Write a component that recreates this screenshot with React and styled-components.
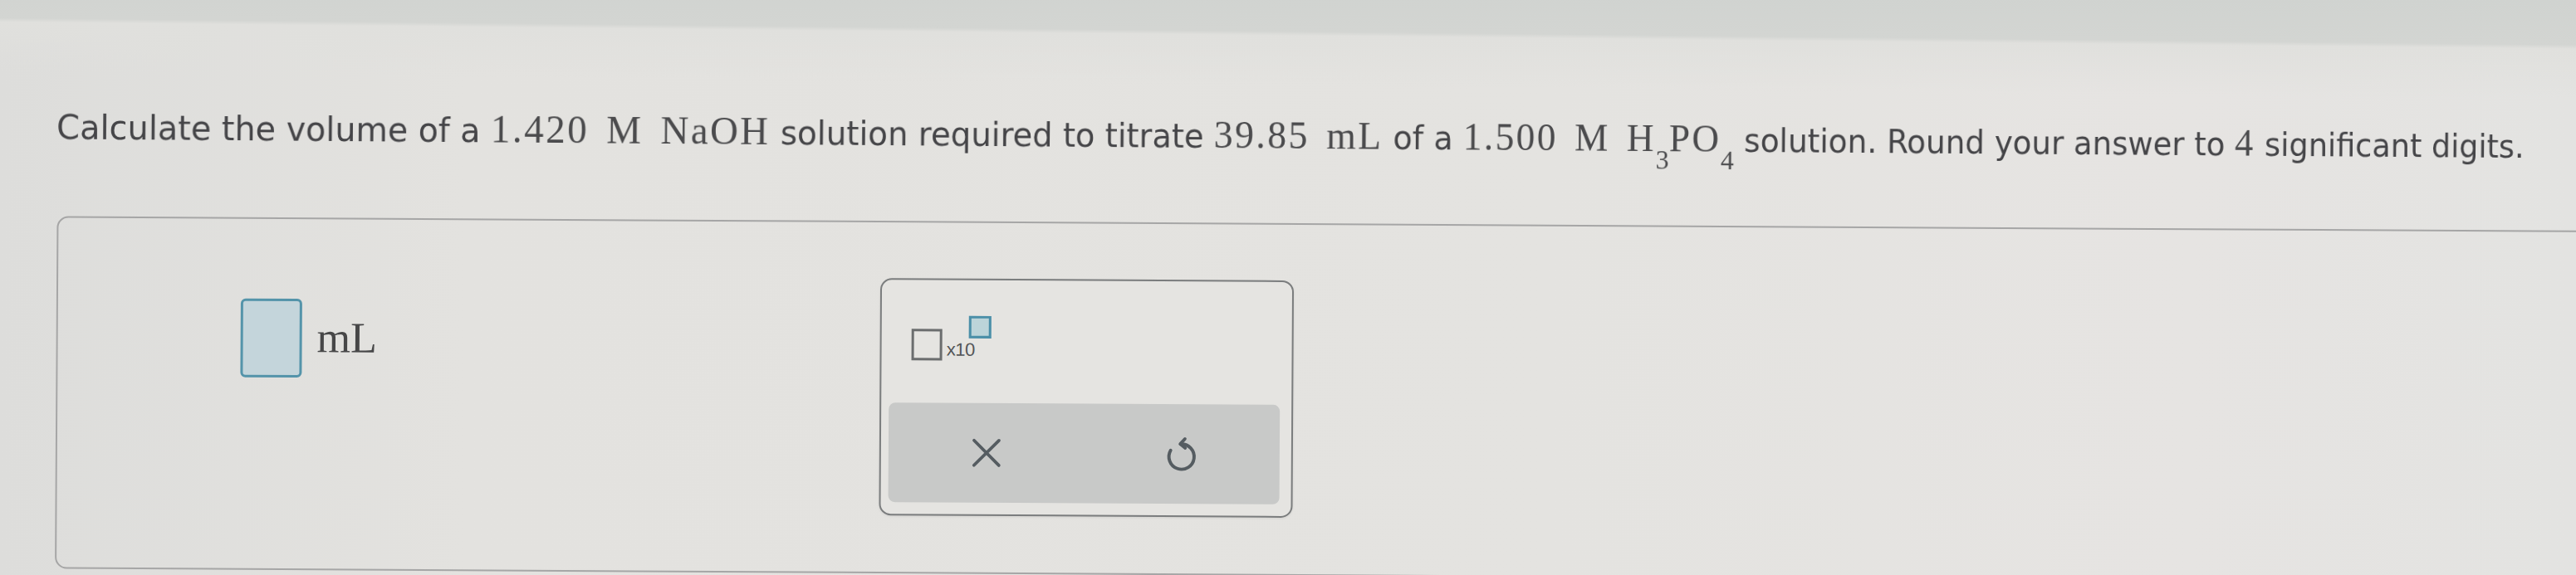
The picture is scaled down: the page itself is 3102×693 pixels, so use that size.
import React from 'react';
import styled, { createGlobalStyle } from 'styled-components';

const GlobalStyle = createGlobalStyle`
  html, body {
    margin: 0;
    padding: 0;
  }

  body {
    width: 3102px;
    height: 693px;
    overflow: hidden;
    font-family: "DejaVu Sans", Verdana, sans-serif;
    background:
      linear-gradient(180.6deg, #d0d3d0 0, #d3d5d2 54px, #e0e0dd 59px, rgba(224, 224, 221, 0) 120px),
      linear-gradient(90deg, #dddddb 0, #e3e2df 18%, #e4e3e0 60%, #e6e4e2 85%, #e3e3e1 100%);
  }
`;

const Page = styled.main`
  padding: 129px 0 0 69px;
  transform: rotate(0.33deg);
  transform-origin: 0 0;
`;

/* the photo was taken at a slight angle: the far (right) end of the line is smaller */
const Question = styled.p`
  margin: 0 0 83px;
  height: 48px;
  white-space: nowrap;
  font-size: 40px;
  line-height: 48px;
  color: #454548;
  transform: perspective(2000px) rotateY(1.76deg) rotate(0.12deg);
  transform-origin: 0 50%;
`;

const Math = styled.span`
  font-family: "Liberation Serif", "Times New Roman", serif;
  font-size: 48px;
  line-height: 0;
  letter-spacing: 2.5px;
  word-spacing: 7px;
  color: #4b4b4d;
`;

const Sub = styled.sub`
  font-size: 34px;
  line-height: 0;
  letter-spacing: 0;
  vertical-align: -22px;
`;

const Panel = styled.section`
  box-sizing: border-box;
  display: flex;
  align-items: flex-start;
  margin-left: 1px;
  width: 3200px;
  height: 425px;
  padding: 67px 0 0 220px;
  border: 2px solid #a6a6a6;
  border-radius: 14px;
`;

const AnswerGroup = styled.div`
  display: flex;
  align-items: flex-start;
  margin-top: 29px;
`;

const AnswerBox = styled.div`
  box-sizing: border-box;
  width: 74px;
  height: 95px;
  border: 3px solid #5494aa;
  border-radius: 6px;
  background: #c4d5db;
`;

const Unit = styled.span`
  margin: 21px 0 0 18px;
  font-family: "Liberation Serif", "Times New Roman", serif;
  font-size: 52px;
  line-height: 51px;
  color: #474748;
`;

const Keypad = styled.div`
  box-sizing: border-box;
  display: flex;
  flex-direction: column;
  align-items: flex-start;
  margin-left: 606px;
  width: 498px;
  height: 286px;
  padding: 0 14px 14px 9px;
  border: 2px solid #7b7d7e;
  border-radius: 14px;
  background: #e5e4e1;
  box-shadow: 0 1px 3px rgba(0, 0, 0, 0.08);
`;

const SciNotation = styled.div`
  display: flex;
  align-items: flex-end;
  margin: 43px 0 0 27px;
`;

const Mantissa = styled.span`
  box-sizing: border-box;
  width: 37px;
  height: 38px;
  border: 3px solid #6b6d6e;
`;

const Times = styled.span`
  margin: 0 0 2px 5px;
  font-family: "Liberation Sans", Arial, sans-serif;
  font-size: 22px;
  line-height: 22px;
  letter-spacing: -0.5px;
  color: #535557;
`;

const Exponent = styled.span`
  box-sizing: border-box;
  align-self: flex-start;
  margin: 0 0 27px -7px;
  width: 27px;
  height: 27px;
  border: 3px solid #4b8fa8;
  background: #bcd4d9;
`;

const ButtonBar = styled.div`
  display: grid;
  grid-template-columns: 1fr 1fr;
  align-self: stretch;
  margin-top: auto;
  height: 120px;
  border-radius: 8px;
  background: #c8c9c8;
`;

const IconButton = styled.button`
  display: flex;
  align-items: center;
  justify-content: center;
  padding: 0;
  border: 0;
  background: none;
  color: #555c61;
`;

const ClearIcon = () => (
  <svg width="36" height="36" viewBox="0 0 36 36" fill="none" stroke="currentColor" strokeWidth="3.8" strokeLinecap="round">
    <path d="M3 3L33 33M33 3L3 33" />
  </svg>
);

const UndoIcon = () => (
  <svg width="52" height="52" viewBox="0 0 24 24" fill="none" stroke="currentColor" strokeWidth="1.8" strokeLinecap="round" strokeLinejoin="round">
    <path d="M11.5 6.5A7 7 0 1 1 5.9 10" />
    <path d="M13.8 3.6L11.2 6.4L14 8.6" />
  </svg>
);

export default function App() {
  return (
    <>
      <GlobalStyle />
      <Page>
        <Question>
          Calculate the volume of a <Math>1.420 M NaOH</Math> solution required to titrate{' '}
          <Math>39.85 mL</Math> of a{' '}
          <Math>
            1.500 M H<Sub>3</Sub>PO<Sub>4</Sub>
          </Math>{' '}
          solution. Round your answer to <Math>4</Math> significant digits.
        </Question>
        <Panel>
          <AnswerGroup>
            <AnswerBox />
            <Unit>mL</Unit>
          </AnswerGroup>
          <Keypad>
            <SciNotation>
              <Mantissa />
              <Times>x10</Times>
              <Exponent />
            </SciNotation>
            <ButtonBar>
              <IconButton aria-label="Clear">
                <ClearIcon />
              </IconButton>
              <IconButton aria-label="Undo">
                <UndoIcon />
              </IconButton>
            </ButtonBar>
          </Keypad>
        </Panel>
      </Page>
    </>
  );
}
